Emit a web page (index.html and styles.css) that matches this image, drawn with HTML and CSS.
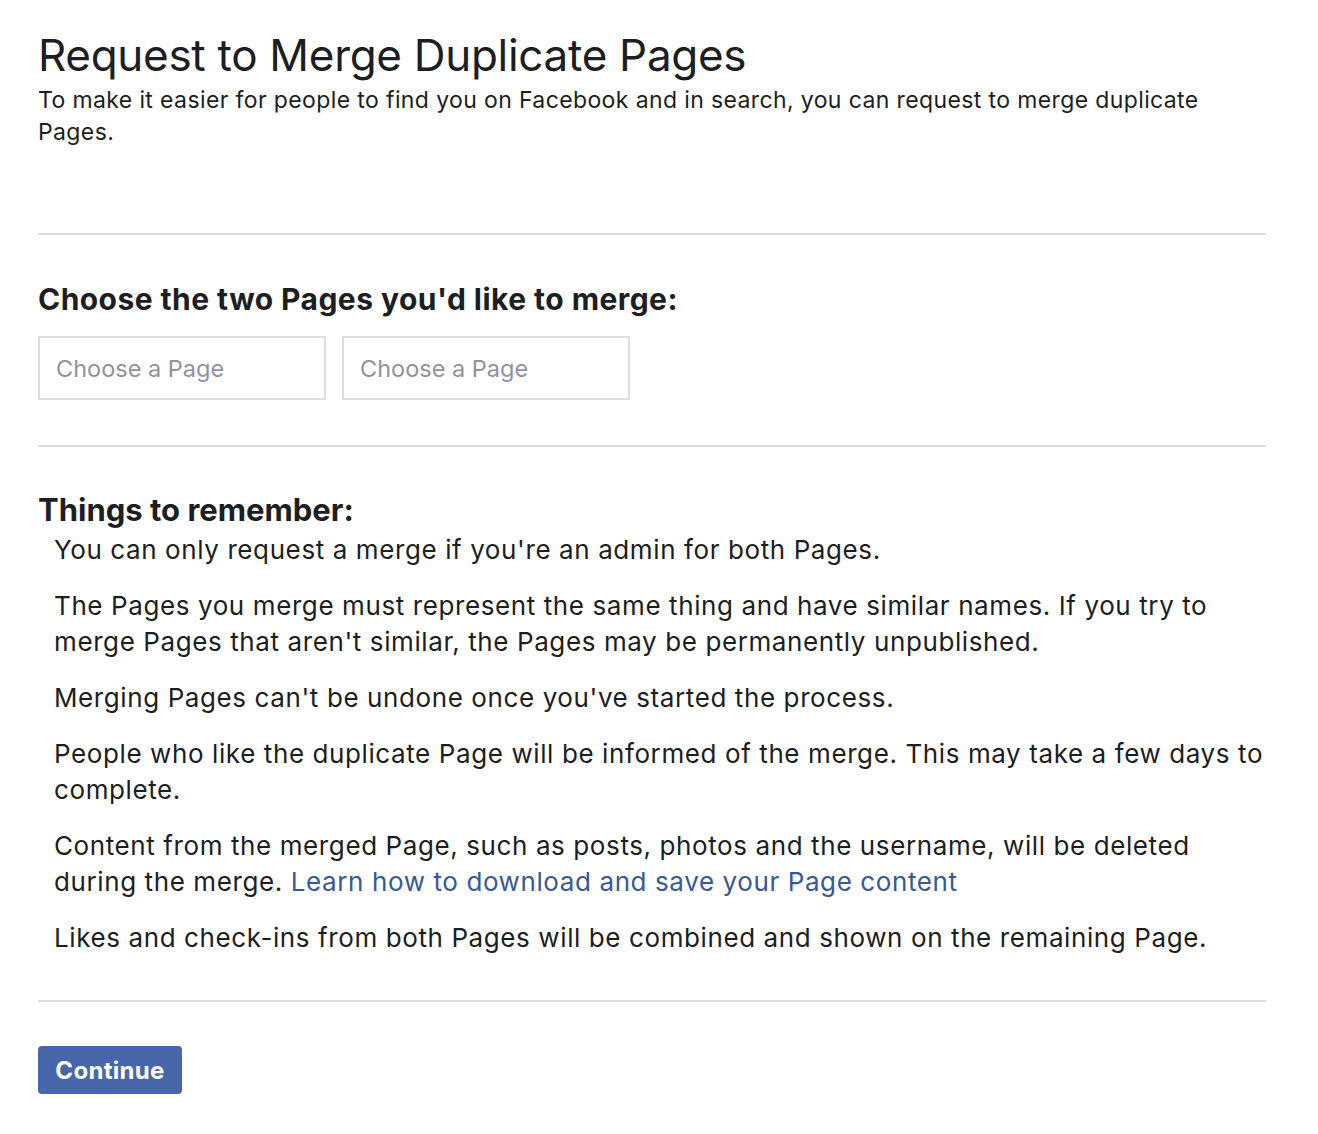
FILE: index.html
```html
<!DOCTYPE html>
<html>
	<head>
		<meta charset="utf-8">
		<title>Request to Merge Duplicate Pages</title>
		<link rel="stylesheet" href="styles.css">
	</head>
	<body>
		<div class="merge">
			<div class="intro">
				<h1 class="title">Request to Merge Duplicate Pages</h1>
				<p class="lead">To make it easier for people to find you on Facebook and in search, you can request to merge duplicate Pages.</p>
			</div>

			<div class="section choose">
				<h2 class="heading">Choose the two Pages you'd like to merge:</h2>
				<div class="pickers">
					<input class="picker" type="text" placeholder="Choose a Page">
					<input class="picker" type="text" placeholder="Choose a Page">
				</div>
			</div>

			<div class="section remember">
				<h2 class="heading big">Things to remember:</h2>
				<ul class="notes">
					<li>You can only request a merge if you're an admin for both Pages.</li>
					<li>The Pages you merge must represent the same thing and have similar names. If you try to merge Pages that aren't similar, the Pages may be permanently unpublished.</li>
					<li>Merging Pages can't be undone once you've started the process.</li>
					<li>People who like the duplicate Page will be informed of the merge. This may take a few days to complete.</li>
					<li>Content from the merged Page, such as posts, photos and the username, will be deleted during the merge. <a href="#">Learn how to download and save your Page content</a></li>
					<li>Likes and check-ins from both Pages will be combined and shown on the remaining Page.</li>
				</ul>
			</div>

			<div class="actions">
				<button class="continue">Continue</button>
			</div>
		</div>
	</body>
</html>
```

FILE: styles.css
```css
* {
	margin: 0;
	padding: 0;
	box-sizing: border-box;
}

body {
	font-family: Inter, "Noto Sans", sans-serif;
	color: #1c1e21;
	background: #ffffff;
}

ul {
	list-style: none;
}

.merge {
	width: 1228px;
	margin-left: 38px;
	padding-top: 26px;
}

.intro {
	padding-bottom: 85px;
	border-bottom: 2px solid #dadde1;
}

.title {
	font-size: 44px;
	font-weight: 400;
	line-height: 58px;
	letter-spacing: -0.3px;
}

.lead {
	font-size: 23px;
	line-height: 32px;
	letter-spacing: 0.38px;
	width: 1190px;
}

.section {
	border-bottom: 2px solid #dadde1;
}

.choose {
	padding-top: 44px;
	padding-bottom: 45px;
}

.heading {
	font-size: 30px;
	font-weight: 700;
	line-height: 40px;
	letter-spacing: 0.45px;
}

.pickers {
	display: flex;
	gap: 16px;
	margin-top: 17px;
}

.picker {
	width: 288px;
	height: 64px;
	border: 2px solid #dadde1;
	padding: 0 16px;
	font-family: inherit;
	font-size: 23.5px;
	color: #1c1e21;
	outline: none;
}

.picker::placeholder {
	color: #8d949e;
}

.remember {
	padding-top: 44px;
	padding-bottom: 44px;
}

.heading.big {
	font-size: 31px;
	line-height: 38px;
	letter-spacing: 0;
}

.notes {
	padding-left: 16px;
	margin-top: 3px;
}

.notes li {
	font-size: 26px;
	line-height: 36px;
	letter-spacing: 0.6px;
	margin-bottom: 20px;
}

.notes li:last-child {
	margin-bottom: 0;
}

.notes a {
	color: #385898;
	text-decoration: none;
}

.actions {
	padding-top: 44px;
}

.continue {
	width: 144px;
	height: 48px;
	background-color: #4867aa;
	border: none;
	border-radius: 4px;
	color: #ffffff;
	font-family: inherit;
	font-size: 24px;
	font-weight: 700;
	letter-spacing: 0.3px;
	cursor: pointer;
}
```
